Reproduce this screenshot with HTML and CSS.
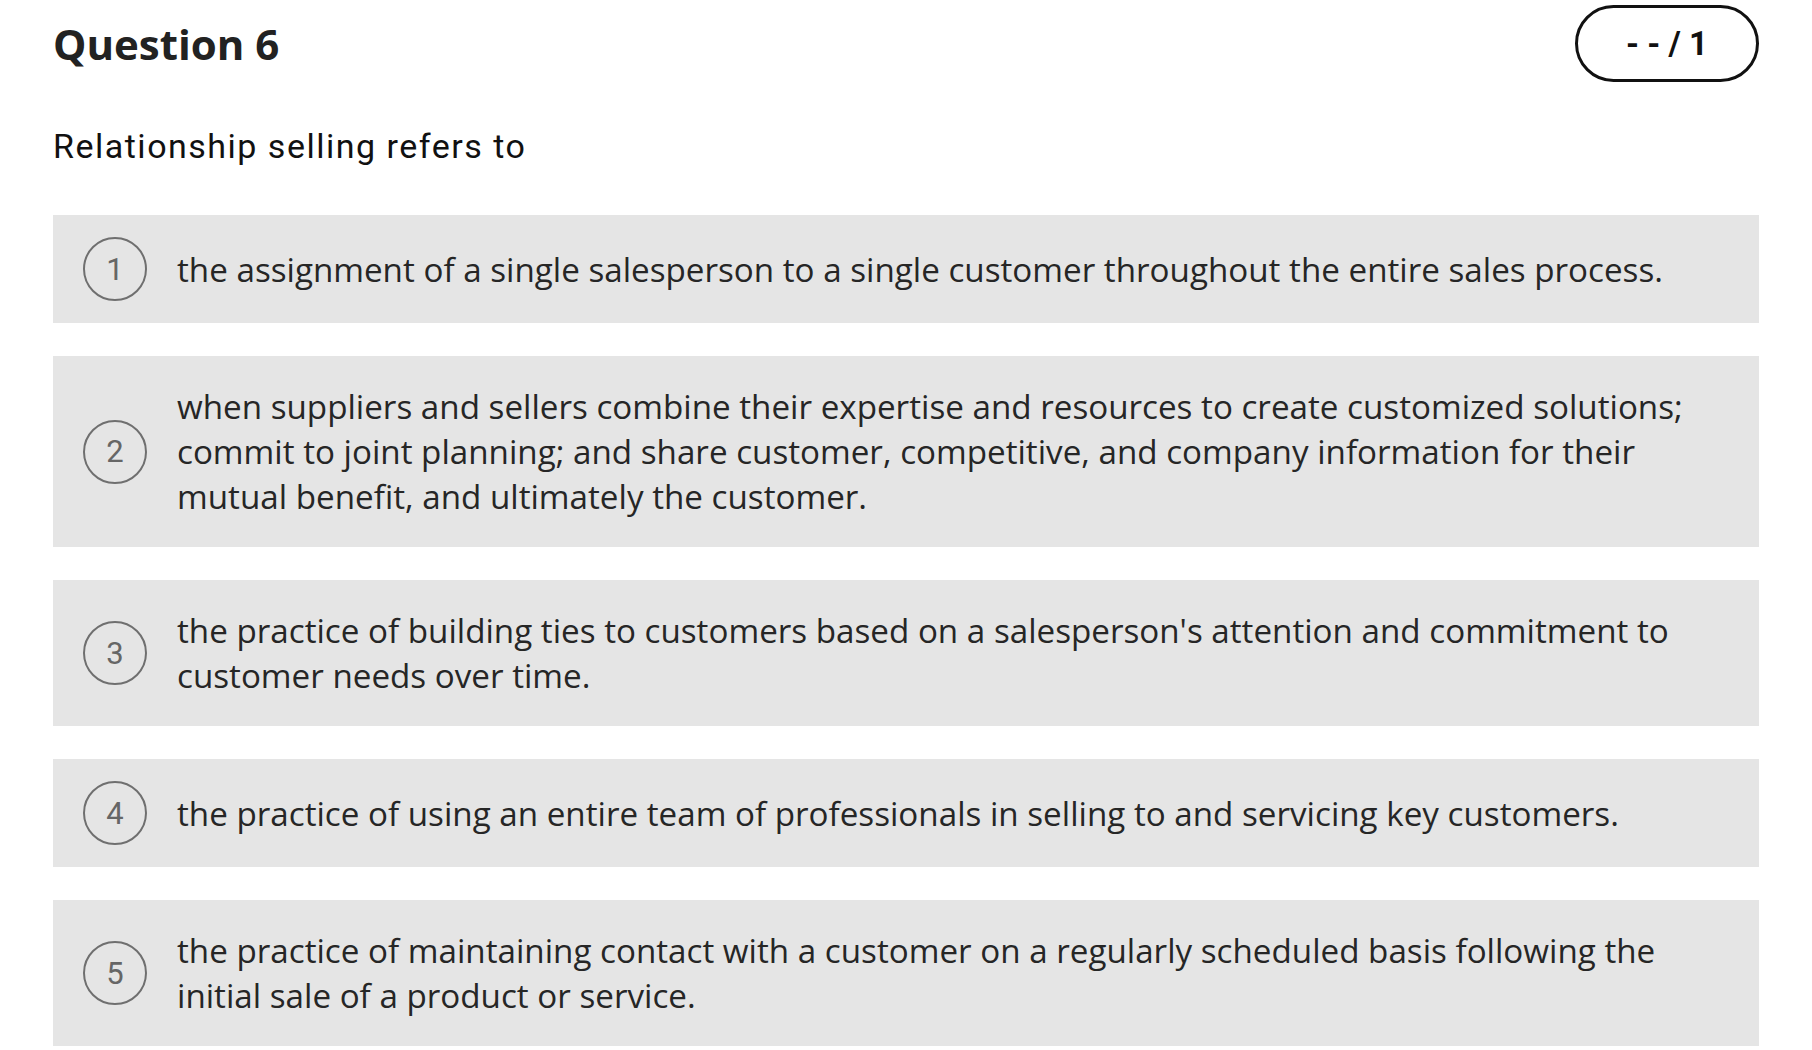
FILE: index.html
```html
<!DOCTYPE html>
<html lang="en">
<head>
<meta charset="utf-8">
<title>Question 6</title>
<link rel="stylesheet" href="styles.css">
</head>
<body>
<main class="question">
  <header class="q-header">
    <h1 class="q-title">Question 6</h1>
    <div class="q-score">- - / 1</div>
  </header>
  <p class="q-prompt">Relationship selling refers to</p>
  <ol class="options">
    <li class="option"><span class="num">1</span><span class="opt-text">the assignment of a single salesperson to a single customer throughout the entire sales process.</span></li>
    <li class="option"><span class="num">2</span><span class="opt-text">when suppliers and sellers combine their expertise and resources to create customized solutions; commit to joint planning; and share customer, competitive, and company information for their mutual benefit, and ultimately the customer.</span></li>
    <li class="option"><span class="num">3</span><span class="opt-text">the practice of building ties to customers based on a salesperson's attention and commitment to customer needs over time.</span></li>
    <li class="option"><span class="num">4</span><span class="opt-text">the practice of using an entire team of professionals in selling to and servicing key customers.</span></li>
    <li class="option"><span class="num">5</span><span class="opt-text">the practice of maintaining contact with a customer on a regularly scheduled basis following the initial sale of a product or service.</span></li>
  </ol>
</main>
</body>
</html>
```
FILE: styles.css
```css
html, body {
  margin: 0;
  padding: 0;
  background: #ffffff;
}
.question {
  padding: 5px 53px 0 53px;
  font-family: "Open Sans", sans-serif;
  color: #222222;
}
.q-header {
  display: flex;
  align-items: center;
  justify-content: space-between;
}
.q-title {
  margin: 0;
  font-family: "Open Sans", sans-serif;
  font-weight: 700;
  font-size: 42px;
  line-height: 60px;
  color: #222222;
}
.q-score {
  box-sizing: border-box;
  width: 184px;
  height: 77px;
  border: 3px solid #111111;
  border-radius: 40px;
  display: flex;
  align-items: center;
  justify-content: center;
  font-family: Roboto, sans-serif;
  font-weight: 700;
  font-size: 33px;
  color: #111111;
}
.q-prompt {
  margin: 44px 0 0 0;
  font-family: Roboto, sans-serif;
  font-size: 34px;
  letter-spacing: 1.5px;
  line-height: 40px;
  color: #111111;
}
.options {
  list-style: none;
  margin: 49px 0 0 0;
  padding: 0;
  display: flex;
  flex-direction: column;
  gap: 33px;
}
.option {
  box-sizing: border-box;
  background: #e5e5e5;
  display: flex;
  align-items: center;
  gap: 30px;
  padding: 22px 30px 22px 30px;
}
.num {
  flex: 0 0 auto;
  box-sizing: border-box;
  width: 64px;
  height: 64px;
  border: 2px solid #6f6f6f;
  border-radius: 50%;
  display: flex;
  align-items: center;
  justify-content: center;
  font-family: Roboto, sans-serif;
  font-size: 31px;
  color: #666666;
}
.opt-text {
  padding: 6px 0;
  font-family: "Open Sans", sans-serif;
  font-size: 33.2px;
  line-height: 45px;
  color: #262626;
}
```
